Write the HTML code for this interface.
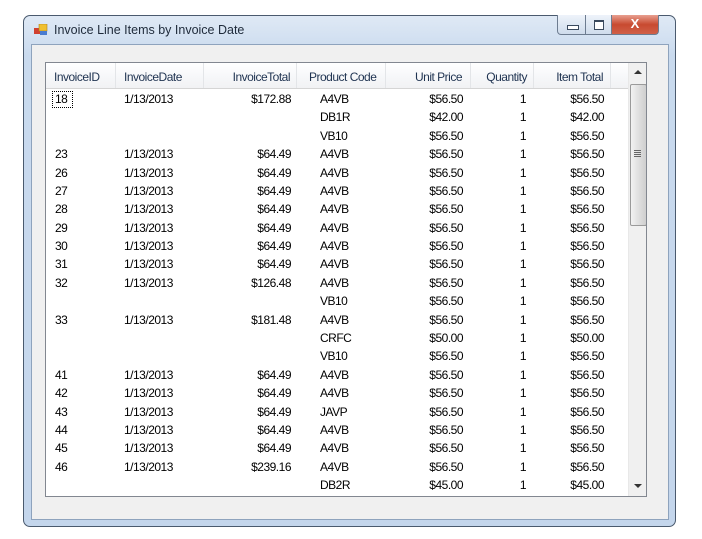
<!DOCTYPE html>
<html><head><meta charset="utf-8"><style>
body{margin:0;width:702px;height:539px;background:#fff;position:relative;overflow:hidden;font-family:"Liberation Sans",Arial,sans-serif;}
.win{position:absolute;left:23px;top:15px;width:651px;height:510px;border:1px solid #4a5a6e;border-radius:7px;background:linear-gradient(#dfe9f5,#c9daee 40px,#c4d6ec);}
.client{position:absolute;left:31px;top:44px;width:636px;height:474px;background:#f0f0f0;border:1px solid #8ea3bd;}
.title{position:absolute;left:54px;top:23px;font-size:12.5px;color:#1e2a3a;}
.icon{position:absolute;left:34px;top:24px;width:14px;height:12px;}
.btns{position:absolute;left:557px;top:15px;height:20px;}
.b{position:absolute;top:0;height:19px;border:1px solid #6d7c90;border-top:none;}
.lv{position:absolute;left:45px;top:62px;width:600px;height:433px;background:#fff;border:1px solid #828790;overflow:hidden;}
.hd{position:absolute;left:0;top:0;width:582px;height:25px;background:linear-gradient(#fff,#f7f8fa 50%,#f1f2f4);border-bottom:1px solid #d5d5d5;}
.hs{position:absolute;top:0;width:1px;height:25px;background:#e3e5e8;}
.t{position:absolute;font-size:12px;color:#000;letter-spacing:-0.5px;white-space:nowrap;line-height:14px;}
.sb{position:absolute;left:582px;top:0;width:18px;height:433px;background:#f0f0f0;border-left:1px solid #e8e8e8;}
</style></head><body>
<div class="win"></div>
<svg class="icon" viewBox="0 0 14 12"><rect x="0" y="4" width="6" height="6" fill="#d04030"/><rect x="5" y="0" width="8" height="7" fill="#f0c030" stroke="#b08020" stroke-width=".6"/><rect x="6" y="7" width="7" height="4" fill="#4a7cd0"/></svg>
<div class="title">Invoice Line Items by Invoice Date</div>
<div class="btns">
<div class="b" style="left:0;width:27px;border-radius:0 0 0 4px;background:linear-gradient(#eef3fa,#cfdcec);"><div style="position:absolute;left:9px;top:10px;width:10px;height:3px;border:1px solid #3a4a5e;background:#fff"></div></div>
<div class="b" style="left:28px;width:25px;background:linear-gradient(#eef3fa,#cfdcec);"><div style="position:absolute;left:8px;top:5px;width:8px;height:7px;border:1px solid #3a4a5e;border-top-width:2px;background:#fff"></div></div>
<div class="b" style="left:54px;width:46px;border-radius:0 0 4px 0;background:linear-gradient(#e8a090,#c84a30 50%,#d06048);"><div style="position:absolute;left:0;width:46px;top:1px;text-align:center;color:#fff;font-weight:bold;font-size:13px;">X</div></div>
</div>
<div class="client"></div>
<div class="lv">
<div class="hd">
<div class="hs" style="left:69px"></div><div class="hs" style="left:157px"></div><div class="hs" style="left:250px"></div><div class="hs" style="left:339px"></div><div class="hs" style="left:424px"></div><div class="hs" style="left:487px"></div><div class="hs" style="left:564px"></div>
<div class="t" style="left:8px;top:7px;color:#1e3250">InvoiceID</div>
<div class="t" style="left:78px;top:7px;color:#1e3250">InvoiceDate</div>
<div class="t" style="right:338px;top:7px;color:#1e3250">InvoiceTotal</div>
<div class="t" style="left:263px;top:7px;color:#1e3250">Product Code</div>
<div class="t" style="right:166px;top:7px;color:#1e3250">Unit Price</div>
<div class="t" style="right:101px;top:7px;color:#1e3250">Quantity</div>
<div class="t" style="right:25px;top:7px;color:#1e3250">Item Total</div>
</div>
<div style="position:absolute;left:6px;top:28px;width:19px;height:15px;border:1px dotted #000"></div>
<div id="rows"></div>
<div class="sb">
<svg style="position:absolute;left:5px;top:7px" width="8" height="5"><path d="M0 4 L4 0 L8 4Z" fill="#333"/></svg>
<div style="position:absolute;left:1px;top:21px;width:15px;height:140px;border:1px solid #9a9a9a;border-radius:2px;background:linear-gradient(90deg,#f2f2f2,#dcdcdc 60%,#cfcfcf);"></div>
<svg style="position:absolute;left:5px;top:87px" width="7" height="7"><path d="M0 .5H7M0 2.5H7M0 4.5H7M0 6.5H7" stroke="#666" stroke-width="1"/></svg>
<svg style="position:absolute;left:5px;top:421px" width="8" height="5"><path d="M0 0 L8 0 L4 4Z" fill="#333"/></svg>
</div>
</div>
<script>
var d=[["18","1/13/2013","$172.88","A4VB","$56.50"],["","","","DB1R","$42.00"],["","","","VB10","$56.50"],["23","1/13/2013","$64.49","A4VB","$56.50"],["26","1/13/2013","$64.49","A4VB","$56.50"],["27","1/13/2013","$64.49","A4VB","$56.50"],["28","1/13/2013","$64.49","A4VB","$56.50"],["29","1/13/2013","$64.49","A4VB","$56.50"],["30","1/13/2013","$64.49","A4VB","$56.50"],["31","1/13/2013","$64.49","A4VB","$56.50"],["32","1/13/2013","$126.48","A4VB","$56.50"],["","","","VB10","$56.50"],["33","1/13/2013","$181.48","A4VB","$56.50"],["","","","CRFC","$50.00"],["","","","VB10","$56.50"],["41","1/13/2013","$64.49","A4VB","$56.50"],["42","1/13/2013","$64.49","A4VB","$56.50"],["43","1/13/2013","$64.49","JAVP","$56.50"],["44","1/13/2013","$64.49","A4VB","$56.50"],["45","1/13/2013","$64.49","A4VB","$56.50"],["46","1/13/2013","$239.16","A4VB","$56.50"],["","","","DB2R","$45.00"]];
var h="";d.forEach(function(r,i){var y=(29+i*18.38).toFixed(1);
h+='<div class="t" style="left:9px;top:'+y+'px">'+r[0]+'</div><div class="t" style="left:78px;top:'+y+'px">'+r[1]+'</div><div class="t" style="right:355px;top:'+y+'px">'+r[2]+'</div><div class="t" style="left:274px;top:'+y+'px">'+r[3]+'</div><div class="t" style="right:183px;top:'+y+'px">'+r[4]+'</div><div class="t" style="right:120px;top:'+y+'px">1</div><div class="t" style="right:42px;top:'+y+'px">'+r[4]+'</div>';});
document.getElementById("rows").innerHTML=h;
</script>
</body></html>
